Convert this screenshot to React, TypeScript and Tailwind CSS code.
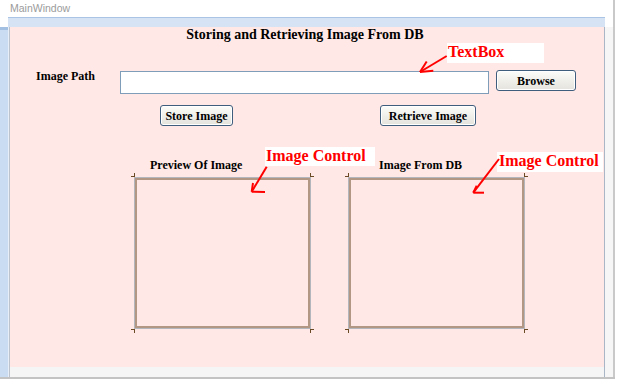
function Ticks() {
  const c = "absolute bg-[#6b4a26]";
  return (
    <>
      <span className={`${c} left-[-1px] top-[-5px] w-[1px] h-[4px]`} />
      <span className={`${c} left-[-4px] top-[-2px] w-[4px] h-[1px]`} />
      <span className={`${c} right-[-1px] top-[-5px] w-[1px] h-[4px]`} />
      <span className={`${c} right-[-4px] top-[-2px] w-[4px] h-[1px]`} />
      <span className={`${c} left-[-1px] bottom-[-5px] w-[1px] h-[4px]`} />
      <span className={`${c} left-[-4px] bottom-[-2px] w-[4px] h-[1px]`} />
      <span className={`${c} right-[-1px] bottom-[-5px] w-[1px] h-[4px]`} />
      <span className={`${c} right-[-4px] bottom-[-2px] w-[4px] h-[1px]`} />
    </>
  );
}

function ImageBox() {
  return (
    <div className="relative w-[177px] h-[152px] border border-[#b3b6bd]">
      <div className="w-full h-full border-2 border-[#b39785]" />
      <Ticks />
    </div>
  );
}

const btn =
  "h-[21px] rounded-[3px] border border-[#3f5d7d] bg-linear-to-b from-[#fcfcfa] to-[#e4e3dc] shadow-[inset_0_0_0_1px_#ffffff] text-[12px] leading-[14px] font-bold text-black flex items-center justify-center";

const note =
  "absolute bg-white font-['Liberation_Serif',serif] text-[16px] leading-[18px] font-bold text-[#ff0000]";

export default function App() {
  return (
    <div className="w-[617px] h-[380px] bg-white flex flex-col overflow-hidden font-['Liberation_Serif',serif]">
      <div className="flex h-[377px]">
        <div className="w-[613px] flex flex-col">
          <div className="h-[17px] pl-[10px] pt-[2px] text-[10.5px] leading-[13px] text-[#9b9b9b] font-['Liberation_Sans',sans-serif]">
            MainWindow
          </div>
          <div className="h-[10px] flex">
            <div className="w-[8px] bg-white" />
            <div className="w-[597px] bg-[#d5e3f4] border-t border-[#a9c4e4]" />
            <div className="w-[8px] bg-white" />
          </div>
          <div className="flex h-[350px]">
            <div className="w-[8px] bg-[#cadcf2] border-t-[3px] border-[#a3c0e3]" />
            <div className="w-[1px] bg-[#e7eef8]" />
            <div className="w-[595px] flex flex-col border-l border-[#bcc3cc]">
              <div className="relative h-[340px] bg-[#ffe8e6] flex flex-col text-black">
                <div className="h-[16px] pr-[4px] text-center text-[14px] leading-[16px] font-bold">
                  Storing and Retrieving Image From DB
                </div>

                <div className="mt-[27px] flex items-start">
                  <div className="ml-[26px] w-[84px] mt-[-1px] text-[12px] leading-[14px] font-bold">
                    Image Path
                  </div>
                  <div className="w-[369px] h-[23px] mt-[1px] border border-[#7f9db9] bg-white" />
                  <div className={`${btn} ml-[7px] w-[80px]`}>Browse</div>
                </div>

                <div className="mt-[11px] flex">
                  <div className={`${btn} ml-[150px] w-[73px]`}>Store Image</div>
                  <div className={`${btn} ml-[147px] w-[96px]`}>Retrieve Image</div>
                </div>

                <div className="mt-[32px] flex">
                  <div className="ml-[124px] w-[177px] flex flex-col">
                    <div className="pl-[16px] text-[12px] leading-[14px] font-bold">Preview Of Image</div>
                    <div className="mt-[5px]">
                      <ImageBox />
                    </div>
                  </div>
                  <div className="ml-[37px] w-[177px] flex flex-col">
                    <div className="pl-[31px] text-[12px] leading-[14px] font-bold">Image From DB</div>
                    <div className="mt-[5px]">
                      <ImageBox />
                    </div>
                  </div>
                </div>

                <div className={`${note} left-[437px] top-[16px] w-[97px] h-[20px] pl-[1px]`}>TextBox</div>
                <div className={`${note} left-[255px] top-[120px] w-[110px] h-[19px] pl-[1px]`}>Image Control</div>
                <div className={`${note} left-[487px] top-[125px] w-[106px] h-[20px] pl-[2px]`}>Image Control</div>
                <svg className="absolute left-0 top-0 pointer-events-none" width="594" height="340">
                  <g stroke="#ff0000" strokeWidth="2" fill="none">
                    <line x1="436.7" y1="29" x2="410" y2="45" />
                    <line x1="410" y1="45" x2="416.7" y2="34.5" />
                    <line x1="410" y1="45" x2="423.3" y2="43.7" />

                    <line x1="256.7" y1="139.7" x2="241.7" y2="164.7" />
                    <line x1="241.7" y1="164.7" x2="243" y2="156" />
                    <line x1="241.7" y1="164.7" x2="255" y2="165" />

                    <line x1="489" y1="132" x2="463.3" y2="165.7" />
                    <line x1="463.3" y1="165.7" x2="466.7" y2="158.7" />
                    <line x1="463.3" y1="165.7" x2="474" y2="165.7" />
                  </g>
                </svg>
              </div>
              <div className="h-[10px] bg-[#f5f5f5]" />
            </div>
            <div className="w-[1px] bg-[#aab5c5]" />
            <div className="w-[8px] bg-[#f6f6f6]" />
          </div>
        </div>
        <div className="w-[2px] bg-[#c9c9c9]" />
      </div>
      <div className="w-[615px] h-[2px] bg-[#c3c3c3]" />
    </div>
  );
}
